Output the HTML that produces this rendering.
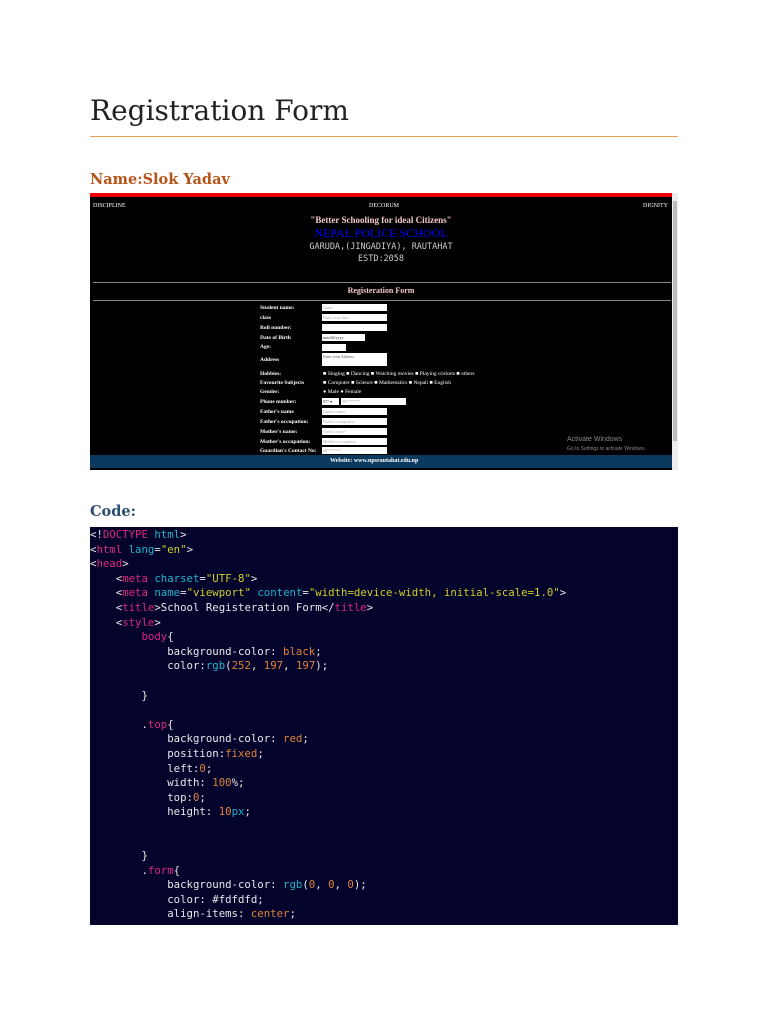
<!DOCTYPE html>
<html><head><meta charset="utf-8"><style>
body{margin:0;background:#fff;width:768px;height:1024px;position:relative;font-family:"DejaVu Serif","Liberation Serif",serif;}
.h1{position:absolute;left:90px;top:94px;font-size:28px;color:#222;}
.rule{position:absolute;left:90px;top:136px;width:588px;height:1px;background:#e9a15a;}
.name{position:absolute;left:90px;top:171px;font-size:14.5px;font-weight:bold;color:#b5541a;}
.code{position:absolute;left:90px;top:503px;font-size:14.5px;font-weight:bold;color:#284d74;}
.shot{position:absolute;left:90px;top:193px;width:588px;height:277px;background:#000;overflow:hidden;font-family:"Liberation Serif",serif;color:#fff;}
.shot .red{position:absolute;left:0;top:0;width:582px;height:4px;background:#e00;}
.sb{position:absolute;right:0;top:0;width:6px;height:277px;background:#eee;}
.sb i{position:absolute;left:1px;top:8px;width:4px;height:240px;background:#bbb;}
.t{position:absolute;font-size:6px;}
.ln{position:absolute;left:3px;width:578px;height:1px;background:#888;}
.lab{position:absolute;left:170px;font-size:5.5px;font-weight:bold;}
.in{position:absolute;left:232px;width:64px;height:7px;background:#fff;font-size:4px;color:#aaa;line-height:7px;padding-left:1px;}
.opt{position:absolute;left:233px;font-size:5.5px;}
.foot{position:absolute;left:0;top:262px;width:582px;height:13px;background:#0c3a5e;color:#fff;font-weight:bold;font-size:6px;line-height:13px;}
.cb{position:absolute;left:90px;top:527px;width:588px;height:397px;background:#03032b;font-family:"DejaVu Sans Mono","Liberation Mono",monospace;font-size:10.7px;line-height:14.6px;color:#e8e8e8;white-space:pre;padding-top:1px;}
.p{color:#e0267d}.c{color:#1cb6c9}.y{color:#d3cf2a}.o{color:#e0823a}
</style></head><body>
<div class="h1">Registration Form</div>
<div class="rule"></div>
<div class="name">Name:Slok Yadav</div>
<div class="shot">
<div class="red"></div>
<div class="t" style="left:3px;top:10px">DISCIPLINE</div>
<div class="t" style="left:279px;top:10px">DECORUM</div>
<div class="t" style="left:553px;top:10px">DIGNITY</div>
<div class="t" style="left:0;width:582px;text-align:center;top:22px;font-size:9px;font-weight:bold;color:#f2c8c8">"Better Schooling for ideal Citizens"</div>
<div class="t" style="left:0;width:582px;text-align:center;top:33px;font-size:12px;color:#00f">NEPAL POLICE SCHOOL</div>
<div class="t" style="left:0;width:582px;text-align:center;top:49px;font-size:8.5px;color:#ccc;font-family:'DejaVu Sans Mono',monospace">GARUDA,(JINGADIYA), RAUTAHAT</div>
<div class="t" style="left:0;width:582px;text-align:center;top:61px;font-size:8.5px;color:#ccc;font-family:'DejaVu Sans Mono',monospace">ESTD:2058</div>
<div class="ln" style="top:89px"></div>
<div class="t" style="left:0;width:582px;text-align:center;top:93px;font-size:8px;font-weight:bold;color:#f2c8c8">Registeration Form</div>
<div class="ln" style="top:107px"></div>
<div class="lab" style="top:112px">Student name:</div><div class="in" style="top:111px">Name</div>
<div class="lab" style="top:122px">class</div><div class="in" style="top:121px">Enter your class</div>
<div class="lab" style="top:132px">Roll number:</div><div class="in" style="top:131px"></div>
<div class="lab" style="top:142px">Date of Birth</div><div class="in" style="top:141px;width:42px;color:#333">mm/dd/yyyy</div>
<div class="lab" style="top:151px">Age:</div><div class="in" style="top:151px;width:23px"></div>
<div class="lab" style="top:164px">Address</div><div class="in" style="top:160px;height:13px;background:#fff;color:#555">Enter your Address</div>
<div class="lab" style="top:178px">Hobbies:</div><div class="opt" style="top:178px">■ Singing ■ Dancing ■ Watching movies ■ Playing crickets ■ others</div>
<div class="lab" style="top:187px">Favourite Subjects</div><div class="opt" style="top:187px">■ Computer ■ Science ■ Mathematics ■ Nepali ■ English</div>
<div class="lab" style="top:196px">Gender:</div><div class="opt" style="top:196px">● Male ● Female</div>
<div class="lab" style="top:206px">Phone number:</div><div class="in" style="top:205px;width:16px;color:#333">977 ▾</div><div class="in" style="top:205px;left:251px">98*******</div>
<div class="lab" style="top:216px">Father's name</div><div class="in" style="top:215px">Father's name</div>
<div class="lab" style="top:226px">Father's occupation:</div><div class="in" style="top:225px">Father's occupation</div>
<div class="lab" style="top:236px">Mother's name:</div><div class="in" style="top:235px">Father's name</div>
<div class="lab" style="top:246px">Mother's occupation:</div><div class="in" style="top:245px">Mother's occupation</div>
<div class="lab" style="top:255px">Guardian's Contact No:</div><div class="in" style="top:254px">98*******</div>
<div class="t" style="left:477px;top:243px;font-size:7px;color:#888;font-family:'Liberation Sans',sans-serif">Activate Windows</div>
<div class="t" style="left:477px;top:253px;font-size:5px;color:#888;font-family:'Liberation Sans',sans-serif">Go to Settings to activate Windows.</div>
<div class="foot"><span style="margin-left:240px">Website: www.npsrautahat.edu.np</span></div>
<div class="sb"><i></i></div>
</div>
<div class="code">Code:</div>
<div class="cb">&lt;!<span class="p">DOCTYPE</span> <span class="c">html</span>&gt;
&lt;<span class="p">html</span> <span class="c">lang</span>=<span class="y">"en"</span>&gt;
&lt;<span class="p">head</span>&gt;
    &lt;<span class="p">meta</span> <span class="c">charset</span>=<span class="y">"UTF-8"</span>&gt;
    &lt;<span class="p">meta</span> <span class="c">name</span>=<span class="y">"viewport"</span> <span class="c">content</span>=<span class="y">"width=device-width, initial-scale=1.0"</span>&gt;
    &lt;<span class="p">title</span>&gt;School Registeration Form&lt;/<span class="p">title</span>&gt;
    &lt;<span class="p">style</span>&gt;
        <span class="p">body</span>{
            background-color: <span class="o">black</span>;
            color:<span class="c">rgb</span>(<span class="o">252</span>, <span class="o">197</span>, <span class="o">197</span>);

        }

        .<span class="p">top</span>{
            background-color: <span class="o">red</span>;
            position:<span class="o">fixed</span>;
            left:<span class="o">0</span>;
            width: <span class="o">100</span>%;
            top:<span class="o">0</span>;
            height: <span class="o">10</span><span class="c">px</span>;


        }
        .<span class="p">form</span>{
            background-color: <span class="c">rgb</span>(<span class="o">0</span>, <span class="o">0</span>, <span class="o">0</span>);
            color: #fdfdfd;
            align-items: <span class="o">center</span>;</div>
</body></html>
